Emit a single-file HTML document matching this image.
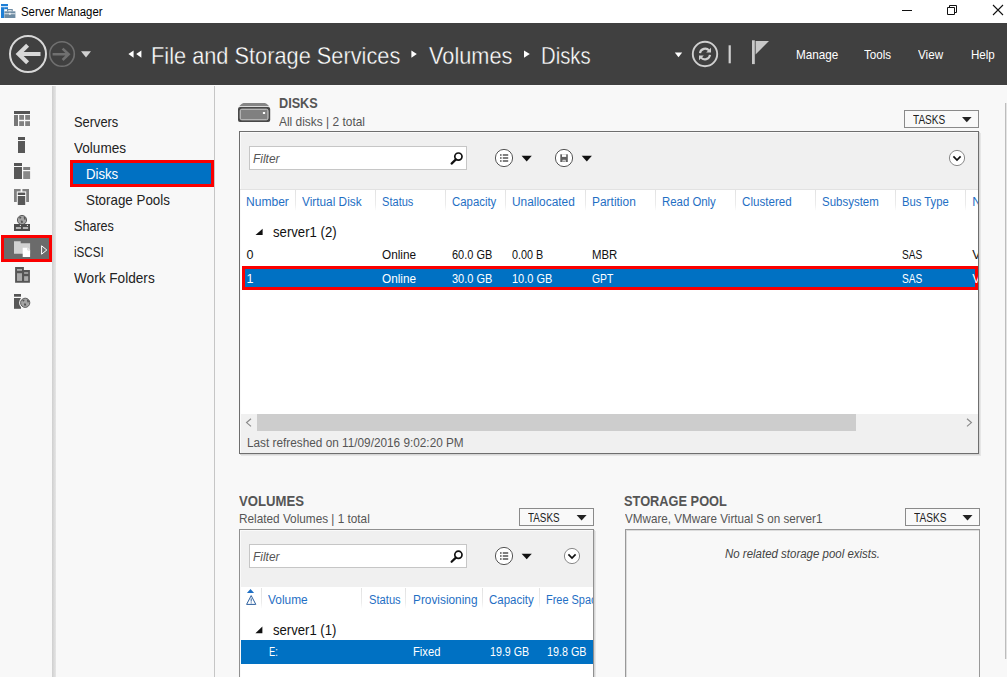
<!DOCTYPE html>
<html lang="en"><head><meta charset="utf-8"><title>Server Manager</title>
<style>
html,body{margin:0;padding:0;}
body{width:1007px;height:677px;overflow:hidden;position:relative;background:#f8f8f8;font-family:"Liberation Sans",Arial,sans-serif;}
.a{position:absolute;}
.t{position:absolute;white-space:pre;transform-origin:0 50%;}
#titlebar{left:0;top:0;width:1007px;height:23px;background:#fff;}
#header{left:0;top:22.5px;width:1007px;height:62.5px;background:#404040;}
#hl{left:0;top:85px;width:1007px;height:1px;background:#fcfcfc;}
#divider{left:52px;top:86px;width:4px;height:591px;background:linear-gradient(90deg,#cfcfcf,#e6e6e6);}
#navline{left:214.2px;top:86px;width:1px;height:591px;background:#c6c6c6;}
.redbox{border:3px solid #fb0000;box-sizing:border-box;}
.panel{box-sizing:border-box;border:1px solid #6e6e6e;box-shadow:1px 1px 0 #d6d6d6, 2px 2px 0 #e6e6e6, inset 1px 1px 0 #fafafa;}
.tasks{box-sizing:border-box;border:1px solid #8a8a8a;background:#f9f9f9;}
.filter{box-sizing:border-box;border:1px solid #c6c6c6;background:#fff;}
.sep{width:1px;background:linear-gradient(180deg,#e2e2e2,#ececec 70%,#fff);}
svg{position:absolute;overflow:visible;}

</style></head><body>
<div class="a" id="titlebar"></div>
<div class="a" id="header"></div>
<div class="a" id="hl"></div>
<div class="a" id="divider"></div>
<div class="a" id="navline"></div>

<!-- title icon + window controls -->
<svg style="left:0;top:0" width="1007" height="23" viewBox="0 0 1007 23">
  <rect x="1" y="4" width="7" height="2.2" fill="#1e7fd6"/>
  <rect x="1" y="7.2" width="3.2" height="10.8" fill="#1e7fd6"/>
  <rect x="4.2" y="7.2" width="3.8" height="2" fill="#1e7fd6"/>
  <rect x="4.4" y="11.3" width="11" height="6.7" fill="#6f8ca3"/>
  <path d="M7.6 11.3 V9.6 H12.2 V11.3" fill="none" stroke="#6f8ca3" stroke-width="1.1"/>
  <rect x="4.4" y="13.3" width="11" height="0.9" fill="#e8eef3"/>
  <rect x="9" y="12.8" width="1.8" height="2" fill="#e8eef3"/>
  <rect x="902" y="10" width="10" height="1" fill="#111"/>
  <path d="M947.5 7.5 H954.5 V14.5 H947.5 Z M949.5 7.5 V5.5 H956.5 V12.5 H954.5" fill="none" stroke="#111" stroke-width="1"/>
  <path d="M993 5 L1003 15 M1003 5 L993 15" fill="none" stroke="#111" stroke-width="1.1"/>
</svg>

<!-- header icons -->
<svg style="left:0;top:23px" width="1007" height="62" viewBox="0 23 1007 62">
  <circle cx="28" cy="54" r="18" fill="none" stroke="#d8d8d8" stroke-width="2"/>
  <path d="M18 54 H40.5 M27.6 45.2 L18.6 54 L27.6 62.8" fill="none" stroke="#d8d8d8" stroke-width="4.2" stroke-linejoin="miter"/>
  <circle cx="62" cy="54" r="12.3" fill="none" stroke="#707070" stroke-width="1.6"/>
  <path d="M52.6 54.3 H68.5 M62.6 48.6 L68.6 54.3 L62.6 60" fill="none" stroke="#707070" stroke-width="2.6"/>
  <path d="M81 51.3 H91 L86 57.6 Z" fill="#d0d0d0"/>
  <path d="M133.6 50.4 V57.8 L128.4 54.1 Z M141.4 50.4 V57.8 L136.2 54.1 Z" fill="#fff"/>
  <path d="M411.4 50.4 V57.8 L416.8 54.1 Z" fill="#fff"/>
  <path d="M524 50.4 V57.8 L529.8 54.1 Z" fill="#fff"/>
  <path d="M674.8 52.6 H682.2 L678.5 57.2 Z" fill="#fff"/>
  <circle cx="705" cy="54" r="12.2" fill="none" stroke="#d0d0d0" stroke-width="1.9"/>
  <path d="M700 53.2 A5.2 5.2 0 0 1 709.2 50.6" fill="none" stroke="#d0d0d0" stroke-width="2.1"/>
  <path d="M711 47.8 V52.6 H706.2 Z" fill="#d0d0d0"/>
  <path d="M710 54.8 A5.2 5.2 0 0 1 700.8 57.4" fill="none" stroke="#d0d0d0" stroke-width="2.1"/>
  <path d="M699 60.2 V55.4 H703.8 Z" fill="#d0d0d0"/>
  <rect x="728.6" y="45.3" width="2.2" height="18" fill="#d0d0d0"/>
  <rect x="752" y="40.3" width="2.8" height="23.8" fill="#c8c8c8"/>
  <path d="M755.6 41 H769 L755.6 54.5 Z" fill="#c8c8c8"/>
</svg>

<!-- left icon bar -->
<div class="a redbox" style="left:1px;top:235px;width:50.7px;height:27px;background:#6b6b6b;"></div>
<svg style="left:0;top:86px" width="52" height="591" viewBox="0 86 52 591">
  <!-- dashboard -->
  <rect x="14" y="111" width="16" height="3" fill="#555"/>
  <rect x="14" y="115" width="4" height="11" fill="#777"/>
  <rect x="19.2" y="115" width="4.8" height="4.8" fill="#808080"/>
  <rect x="25.2" y="115" width="4.8" height="4.8" fill="#808080"/>
  <rect x="19.2" y="121.2" width="4.8" height="4.8" fill="#808080"/>
  <rect x="25.2" y="121.2" width="4.8" height="4.8" fill="#808080"/>
  <!-- local server -->
  <rect x="18" y="137" width="7" height="3" fill="#555"/>
  <rect x="18" y="141" width="7" height="12" fill="#585858"/>
  <!-- all servers -->
  <rect x="14" y="163" width="8" height="3" fill="#555"/>
  <rect x="14" y="167" width="8" height="12" fill="#585858"/>
  <rect x="23.2" y="167" width="6.9" height="3" fill="#808080"/>
  <rect x="23.2" y="171.2" width="6.9" height="7.8" fill="#888"/>
  <!-- group -->
  <rect x="14" y="189" width="6.6" height="2.4" fill="#808080"/>
  <rect x="14" y="189" width="2.8" height="13" fill="#808080"/>
  <rect x="22.4" y="189" width="6.6" height="2.4" fill="#808080"/>
  <rect x="26.2" y="189" width="2.8" height="13" fill="#808080"/>
  <rect x="17.8" y="192.6" width="7.4" height="2.4" fill="#555"/>
  <rect x="17.8" y="196" width="7.4" height="9" fill="#585858"/>
  <!-- globe server -->
  <circle cx="22" cy="220" r="4.6" fill="#a4a4a4" stroke="#5c5c5c" stroke-width="1"/>
  <path d="M19 217.4 l1.8 -0.8 l0.6 1.2 l-1.4 1.2 z M23.6 216.6 l1.6 0.6 l0.6 2 l-1.2 0.8 l-0.6 -1.6 z M20.6 220.6 l2 0.2 l0.4 1.6 l-1.6 0.8 z" fill="#555"/>
  <rect x="14" y="224" width="16" height="7" fill="#4c4c4c"/>
  <rect x="15.9" y="227.1" width="5.1" height="1.8" fill="#c0c0c0"/>
  <rect x="22.9" y="227.1" width="5.2" height="1.8" fill="#c0c0c0"/>
  <rect x="19.9" y="224.9" width="1" height="1" fill="#fff"/>
  <rect x="26.9" y="224.9" width="1" height="1" fill="#fff"/>
  <!-- folder (selected) -->
  <path d="M14 241.2 H20.7 V243.3 H30.1 V253.7 H14 Z" fill="#d2d2d2"/>
  <path d="M22.7 247.8 H27.8 L30.1 250.1 V256.9 H22.7 Z" fill="#fff"/>
  <path d="M27.8 247.8 V250.1 H30.1" fill="none" stroke="#bbb" stroke-width="0.6"/>
  <path d="M41.6 245.8 V254.2 L46.8 250 Z" fill="none" stroke="#fff" stroke-width="1"/>
  <!-- icon 7 -->
  <path d="M15.1 267.1 H23.9 V270.1 H29.9 V282.8 H15.1 Z" fill="#555"/>
  <rect x="17" y="269" width="5" height="1.8" fill="#aaa"/>
  <rect x="17" y="273.2" width="5" height="7.7" fill="#aaa"/>
  <rect x="24.1" y="272.2" width="4.1" height="1.6" fill="#aaa"/>
  <rect x="24.1" y="276.2" width="4.1" height="4.7" fill="#aaa"/>
  <!-- icon 8 -->
  <rect x="14" y="294" width="7" height="2.7" fill="#555"/>
  <rect x="14" y="298" width="7" height="10.8" fill="#585858"/>
  <circle cx="25.2" cy="302.8" r="6.1" fill="#f8f8f8"/>
  <circle cx="25.2" cy="302.8" r="4.6" fill="#a4a4a4" stroke="#5c5c5c" stroke-width="1"/>
  <path d="M22.2 300.2 l1.8 -0.8 l0.6 1.2 l-1.4 1.2 z M26.8 299.4 l1.6 0.6 l0.6 2 l-1.2 0.8 l-0.6 -1.6 z M23.8 303.4 l2 0.2 l0.4 1.6 l-1.6 0.8 z" fill="#555"/>
</svg>

<!-- nav selection -->
<div class="a redbox" style="left:70px;top:160px;width:144px;height:26.8px;background:#0071c3;border-width:3px"></div>

<!-- DISKS header icon -->
<svg style="left:236px;top:100px" width="40" height="26" viewBox="236 100 40 26">
  <path d="M243.6 103 H264.8 Q266 103 269.2 106.2 H239.2 Q242.4 103 243.6 103 Z" fill="#858585"/>
  <rect x="238" y="107" width="32.2" height="15" rx="2" fill="#484848"/>
  <rect x="240.2" y="109.2" width="27.8" height="10.6" rx="1.6" fill="#808080" stroke="#cfcfcf" stroke-width="1"/>
  <rect x="262.9" y="112" width="2.2" height="2" fill="#fff"/>
</svg>

<!-- DISKS TASKS -->
<div class="a tasks" style="left:904px;top:110px;width:75px;height:18px"></div>
<svg style="left:960px;top:114px" width="14" height="10" viewBox="960 114 14 10"><path d="M962 117 H971.6 L966.8 122.3 Z" fill="#222"/></svg>

<!-- DISKS panel -->
<div class="a panel" style="left:239px;top:131px;width:740px;height:323px;background:#f0f0f0;"></div>
<div class="a" style="left:241px;top:189.5px;width:737px;height:224.5px;background:#fff;"></div>
<div class="a filter" style="left:249px;top:146px;width:218px;height:24px"></div>
<div class="a" style="left:240px;top:189px;width:738px;height:1px;background:#e2e2e2"></div>
<!-- col separators -->
<div class="a sep" style="left:295px;top:190px;height:21px"></div>
<div class="a sep" style="left:375px;top:190px;height:21px"></div>
<div class="a sep" style="left:445px;top:190px;height:21px"></div>
<div class="a sep" style="left:505px;top:190px;height:21px"></div>
<div class="a sep" style="left:585px;top:190px;height:21px"></div>
<div class="a sep" style="left:655px;top:190px;height:21px"></div>
<div class="a sep" style="left:735px;top:190px;height:21px"></div>
<div class="a sep" style="left:815px;top:190px;height:21px"></div>
<div class="a sep" style="left:895px;top:190px;height:21px"></div>
<div class="a sep" style="left:965px;top:190px;height:21px"></div>
<!-- selected row -->
<div class="a redbox" style="left:241.5px;top:266px;width:736.5px;height:23.5px;background:#0071c3;border-width:3px"></div>
<!-- clipped right column -->
<div class="a" style="left:965px;top:190px;width:13px;height:100px;overflow:hidden">
  <span class="t" style="left:7.2px;top:5.2px;font-size:12.5px;line-height:15px;color:#1f6fc4;">Name</span>
  <span class="t" style="left:7.2px;top:58px;font-size:12.5px;line-height:15px;color:#111;">VMware</span>
  <span class="t" style="left:7.2px;top:81.8px;font-size:12.5px;line-height:15px;color:#fff;">VMware</span>
</div>
<!-- scrollbar -->
<div class="a" style="left:257px;top:414px;width:599px;height:17px;background:#cdcdcd"></div>
<svg style="left:241px;top:414px" width="737" height="17" viewBox="241 414 737 17">
  <path d="M251 418.8 L246.6 422.6 L251 426.4" fill="none" stroke="#8a8a8a" stroke-width="1.2"/>
  <path d="M967 418.8 L971.4 422.6 L967 426.4" fill="none" stroke="#8a8a8a" stroke-width="1.2"/>
</svg>

<!-- DISKS toolbar icons -->
<svg style="left:440px;top:144px" width="540" height="28" viewBox="440 144 540 28">
  <circle cx="458.4" cy="156.6" r="3.6" fill="none" stroke="#111" stroke-width="1.7"/>
  <path d="M455.9 159.4 L451.6 163.6" stroke="#111" stroke-width="2.2" stroke-linecap="round"/>
  <circle cx="504" cy="158" r="8.6" fill="#fff" stroke="#555" stroke-width="1"/>
  <path d="M500 155.1 h1.6 M502.8 155.1 h5.4 M500 158.1 h1.6 M502.8 158.1 h5.4 M500 161.1 h1.6 M502.8 161.1 h5.4" stroke="#555" stroke-width="1.5"/>
  <path d="M521.6 155.8 H531.8 L526.7 161.4 Z" fill="#111"/>
  <circle cx="564" cy="158" r="8.6" fill="#fff" stroke="#555" stroke-width="1"/>
  <path d="M560.3 154.3 H567.8 V162 H560.3 Z" fill="#606060"/>
  <rect x="562" y="154.3" width="4.2" height="2.6" fill="#fff"/>
  <rect x="562.6" y="159.8" width="3" height="2.2" fill="#fff"/>
  <rect x="563.4" y="160.5" width="1.2" height="1.5" fill="#606060"/>
  <path d="M581.7 155.8 H591.9 L586.8 161.4 Z" fill="#111"/>
  <circle cx="957" cy="158" r="7.6" fill="#fff" stroke="#8a8a8a" stroke-width="1"/>
  <path d="M953.4 156.4 L957 160 L960.6 156.4" fill="none" stroke="#111" stroke-width="1.7"/>
</svg>
<!-- group triangles -->
<svg style="left:250px;top:225px" width="20" height="14" viewBox="250 225 20 14"><path d="M262.6 228.7 V235 H255.5 Z" fill="#111"/></svg>

<!-- VOLUMES -->
<div class="a tasks" style="left:519px;top:508px;width:75px;height:18px"></div>
<svg style="left:574px;top:512px" width="14" height="10" viewBox="574 512 14 10"><path d="M576.6 515 H586.6 L581.6 520.5 Z" fill="#222"/></svg>
<div class="a panel" style="left:239px;top:529px;width:355px;height:160px;background:#f0f0f0;border-color:#909090"></div>
<div class="a" style="left:241px;top:587px;width:352px;height:100px;background:#fff;"></div>
<div class="a filter" style="left:249px;top:544px;width:218px;height:24px"></div>
<div class="a sep" style="left:261px;top:588px;height:21px"></div>
<div class="a sep" style="left:361px;top:588px;height:21px"></div>
<div class="a sep" style="left:405px;top:588px;height:21px"></div>
<div class="a sep" style="left:482px;top:588px;height:21px"></div>
<div class="a sep" style="left:539px;top:588px;height:21px"></div>
<div class="a" style="left:241px;top:640px;width:352px;height:24px;background:#0071c3"></div>
<div class="a" style="left:539px;top:588px;width:54px;height:30px;overflow:hidden">
  <span class="t" style="left:7.3px;top:4.8px;font-size:12.5px;line-height:15px;color:#1f6fc4;transform:scaleX(0.875)">Free Space</span>
</div>
<svg style="left:241px;top:540px" width="352" height="100" viewBox="241 540 352 100">
  <circle cx="458.4" cy="554.8" r="3.6" fill="none" stroke="#111" stroke-width="1.7"/>
  <path d="M455.9 557.6 L451.6 561.8" stroke="#111" stroke-width="2.2" stroke-linecap="round"/>
  <circle cx="504" cy="556" r="8.6" fill="#fff" stroke="#555" stroke-width="1"/>
  <path d="M500 553.1 h1.6 M502.8 553.1 h5.4 M500 556.1 h1.6 M502.8 556.1 h5.4 M500 559.1 h1.6 M502.8 559.1 h5.4" stroke="#555" stroke-width="1.5"/>
  <path d="M521.6 553.7 H531.8 L526.7 559.3 Z" fill="#111"/>
  <circle cx="572" cy="556" r="7.6" fill="#fff" stroke="#8a8a8a" stroke-width="1"/>
  <path d="M568.4 554.4 L572 558 L575.6 554.4" fill="none" stroke="#111" stroke-width="1.7"/>
  <!-- sort + warning -->
  <path d="M246.9 593 H254.1 L250.5 589 Z" fill="#1f6fc4"/>
  <path d="M251.2 595.6 L255.8 604.4 H246.6 Z" fill="none" stroke="#2c5f9e" stroke-width="1"/>
  <path d="M251.2 598.4 V601.6 M251.2 602.4 V603.4" stroke="#2c5f9e" stroke-width="1"/>
  <path d="M262.4 626.4 V633.2 H255.4 Z" fill="#111"/>
</svg>

<!-- STORAGE POOL -->
<div class="a tasks" style="left:905px;top:508px;width:75px;height:18px"></div>
<svg style="left:960px;top:512px" width="14" height="10" viewBox="960 512 14 10"><path d="M962.5 515 H972.5 L967.5 520.5 Z" fill="#222"/></svg>
<div class="a" style="left:625px;top:529px;width:355px;height:160px;box-sizing:border-box;border:1px solid #999;box-shadow:inset 1px 1px 0 #dcdcdc;background:#f8f8f8"></div>

<!-- right scrollbar line -->
<div class="a" style="left:1004.6px;top:103px;width:1.2px;height:556px;background:#bdbdbd"></div>
<div class="a" style="left:1005.8px;top:103px;width:1.2px;height:556px;background:#e4e4e4"></div>

<div id="texts">
<span class="t" style="left:21.2px;top:5.24px;font-size:12px;line-height:14px;color:#000;transform:scaleX(0.9472);">Server Manager</span>
<span class="t" style="left:150.7px;top:41.52px;font-size:23.6px;line-height:28px;color:#fff;transform:scaleX(0.9228);-webkit-text-stroke:0.35px #404040;">File and Storage Services</span>
<span class="t" style="left:428.9px;top:41.52px;font-size:23.6px;line-height:28px;color:#fff;transform:scaleX(0.9215);-webkit-text-stroke:0.35px #404040;">Volumes</span>
<span class="t" style="left:540.9px;top:41.52px;font-size:23.6px;line-height:28px;color:#fff;transform:scaleX(0.8618);-webkit-text-stroke:0.35px #404040;">Disks</span>
<span class="t" style="left:795.5px;top:46.50px;font-size:13px;line-height:16px;color:#fff;transform:scaleX(0.9003);">Manage</span>
<span class="t" style="left:863.6px;top:46.50px;font-size:13px;line-height:16px;color:#fff;transform:scaleX(0.8959);">Tools</span>
<span class="t" style="left:917.6px;top:46.50px;font-size:13px;line-height:16px;color:#fff;transform:scaleX(0.8979);">View</span>
<span class="t" style="left:970.9px;top:46.50px;font-size:13px;line-height:16px;color:#fff;transform:scaleX(0.8897);">Help</span>
<span class="t" style="left:74.2px;top:113.71px;font-size:14.4px;line-height:17px;color:#222;transform:scaleX(0.8933);">Servers</span>
<span class="t" style="left:74.2px;top:139.71px;font-size:14.4px;line-height:17px;color:#222;transform:scaleX(0.9420);">Volumes</span>
<span class="t" style="left:86.3px;top:165.51px;font-size:14.4px;line-height:17px;color:#fff;transform:scaleX(0.9151);">Disks</span>
<span class="t" style="left:86.3px;top:191.51px;font-size:14.4px;line-height:17px;color:#222;transform:scaleX(0.9280);">Storage Pools</span>
<span class="t" style="left:74.2px;top:217.51px;font-size:14.4px;line-height:17px;color:#222;transform:scaleX(0.8748);">Shares</span>
<span class="t" style="left:74.2px;top:243.81px;font-size:14.4px;line-height:17px;color:#222;transform:scaleX(0.8099);">iSCSI</span>
<span class="t" style="left:74.2px;top:270.01px;font-size:14.4px;line-height:17px;color:#222;transform:scaleX(0.9461);">Work Folders</span>
<span class="t" style="left:278.7px;top:94.65px;font-size:14px;line-height:17px;color:#555555;font-weight:700;transform:scaleX(0.9043);">DISKS</span>
<span class="t" style="left:278.5px;top:114.53px;font-size:12.6px;line-height:15px;color:#555555;transform:scaleX(0.9475);">All disks | 2 total</span>
<span class="t" style="left:913.0px;top:112.80px;font-size:12.4px;line-height:15px;color:#222;transform:scaleX(0.8107);">TASKS</span>
<span class="t" style="left:253.0px;top:151.60px;font-size:12.4px;line-height:15px;color:#555;font-style:italic;transform:scaleX(0.9620);">Filter</span>
<span class="t" style="left:246.3px;top:195.17px;font-size:12.5px;line-height:15px;color:#1f6fc4;transform:scaleX(0.9647);">Number</span>
<span class="t" style="left:302.1px;top:195.17px;font-size:12.5px;line-height:15px;color:#1f6fc4;transform:scaleX(0.9463);">Virtual Disk</span>
<span class="t" style="left:382.4px;top:195.17px;font-size:12.5px;line-height:15px;color:#1f6fc4;transform:scaleX(0.8861);">Status</span>
<span class="t" style="left:452.2px;top:195.17px;font-size:12.5px;line-height:15px;color:#1f6fc4;transform:scaleX(0.9108);">Capacity</span>
<span class="t" style="left:512.2px;top:195.17px;font-size:12.5px;line-height:15px;color:#1f6fc4;transform:scaleX(0.9513);">Unallocated</span>
<span class="t" style="left:592.2px;top:195.17px;font-size:12.5px;line-height:15px;color:#1f6fc4;transform:scaleX(0.9551);">Partition</span>
<span class="t" style="left:662.2px;top:195.17px;font-size:12.5px;line-height:15px;color:#1f6fc4;transform:scaleX(0.9109);">Read Only</span>
<span class="t" style="left:742.2px;top:195.17px;font-size:12.5px;line-height:15px;color:#1f6fc4;transform:scaleX(0.9308);">Clustered</span>
<span class="t" style="left:822.2px;top:195.17px;font-size:12.5px;line-height:15px;color:#1f6fc4;transform:scaleX(0.9184);">Subsystem</span>
<span class="t" style="left:902.2px;top:195.17px;font-size:12.5px;line-height:15px;color:#1f6fc4;transform:scaleX(0.9019);">Bus Type</span>
<span class="t" style="left:273.3px;top:223.51px;font-size:14.4px;line-height:17px;color:#111;transform:scaleX(0.9141);">server1 (2)</span>
<span class="t" style="left:246.5px;top:247.97px;font-size:12.5px;line-height:15px;color:#111;">0</span>
<span class="t" style="left:382.4px;top:247.97px;font-size:12.5px;line-height:15px;color:#111;transform:scaleX(0.9435);">Online</span>
<span class="t" style="left:452.2px;top:247.97px;font-size:12.5px;line-height:15px;color:#111;transform:scaleX(0.8785);">60.0 GB</span>
<span class="t" style="left:512.2px;top:247.97px;font-size:12.5px;line-height:15px;color:#111;transform:scaleX(0.8661);">0.00 B</span>
<span class="t" style="left:592.2px;top:247.97px;font-size:12.5px;line-height:15px;color:#111;transform:scaleX(0.9107);">MBR</span>
<span class="t" style="left:902.2px;top:247.97px;font-size:12.5px;line-height:15px;color:#111;transform:scaleX(0.8115);">SAS</span>
<span class="t" style="left:246.5px;top:271.77px;font-size:12.5px;line-height:15px;color:#fff;">1</span>
<span class="t" style="left:382.4px;top:271.77px;font-size:12.5px;line-height:15px;color:#fff;transform:scaleX(0.9435);">Online</span>
<span class="t" style="left:452.2px;top:271.77px;font-size:12.5px;line-height:15px;color:#fff;transform:scaleX(0.8785);">30.0 GB</span>
<span class="t" style="left:512.2px;top:271.77px;font-size:12.5px;line-height:15px;color:#fff;transform:scaleX(0.8785);">10.0 GB</span>
<span class="t" style="left:592.2px;top:271.77px;font-size:12.5px;line-height:15px;color:#fff;transform:scaleX(0.8287);">GPT</span>
<span class="t" style="left:902.2px;top:271.77px;font-size:12.5px;line-height:15px;color:#fff;transform:scaleX(0.8115);">SAS</span>
<span class="t" style="left:247.2px;top:436.37px;font-size:12.5px;line-height:15px;color:#555555;transform:scaleX(0.9430);">Last refreshed on 11/09/2016 9:02:20 PM</span>
<span class="t" style="left:238.5px;top:492.85px;font-size:14px;line-height:17px;color:#555555;font-weight:700;transform:scaleX(0.9388);">VOLUMES</span>
<span class="t" style="left:238.5px;top:511.53px;font-size:12.6px;line-height:15px;color:#555555;transform:scaleX(0.9356);">Related Volumes | 1 total</span>
<span class="t" style="left:528.2px;top:510.80px;font-size:12.4px;line-height:15px;color:#222;transform:scaleX(0.7956);">TASKS</span>
<span class="t" style="left:253.0px;top:549.60px;font-size:12.4px;line-height:15px;color:#555;font-style:italic;transform:scaleX(0.9620);">Filter</span>
<span class="t" style="left:268.2px;top:592.77px;font-size:12.5px;line-height:15px;color:#1f6fc4;transform:scaleX(0.9520);">Volume</span>
<span class="t" style="left:368.5px;top:592.77px;font-size:12.5px;line-height:15px;color:#1f6fc4;transform:scaleX(0.8945);">Status</span>
<span class="t" style="left:412.5px;top:592.77px;font-size:12.5px;line-height:15px;color:#1f6fc4;transform:scaleX(0.9472);">Provisioning</span>
<span class="t" style="left:489.3px;top:592.77px;font-size:12.5px;line-height:15px;color:#1f6fc4;transform:scaleX(0.9190);">Capacity</span>
<span class="t" style="left:273.4px;top:622.31px;font-size:14.4px;line-height:17px;color:#111;transform:scaleX(0.9098);">server1 (1)</span>
<span class="t" style="left:268.7px;top:645.37px;font-size:12.5px;line-height:15px;color:#fff;transform:scaleX(0.7450);">E:</span>
<span class="t" style="left:412.5px;top:645.37px;font-size:12.5px;line-height:15px;color:#fff;transform:scaleX(0.8993);">Fixed</span>
<span class="t" style="left:490.1px;top:645.37px;font-size:12.5px;line-height:15px;color:#fff;transform:scaleX(0.8545);">19.9 GB</span>
<span class="t" style="left:546.9px;top:645.37px;font-size:12.5px;line-height:15px;color:#fff;transform:scaleX(0.8589);">19.8 GB</span>
<span class="t" style="left:624.3px;top:492.85px;font-size:14px;line-height:17px;color:#555555;font-weight:700;transform:scaleX(0.9143);">STORAGE POOL</span>
<span class="t" style="left:624.5px;top:512.13px;font-size:12.6px;line-height:15px;color:#555555;transform:scaleX(0.9257);">VMware, VMware Virtual S on server1</span>
<span class="t" style="left:913.8px;top:510.80px;font-size:12.4px;line-height:15px;color:#222;transform:scaleX(0.8157);">TASKS</span>
<span class="t" style="left:724.6px;top:546.97px;font-size:12.5px;line-height:15px;color:#444;font-style:italic;transform:scaleX(0.9174);">No related storage pool exists.</span>
</div>
</body></html>
